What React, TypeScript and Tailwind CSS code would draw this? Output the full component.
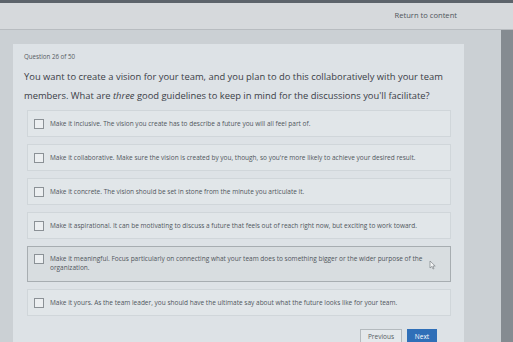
const options = [
  "Make it inclusive. The vision you create has to describe a future you will all feel part of.",
  "Make it collaborative. Make sure the vision is created by you, though, so you're more likely to achieve your desired result.",
  "Make it concrete. The vision should be set in stone from the minute you articulate it.",
  "Make it aspirational. It can be motivating to discuss a future that feels out of reach right now, but exciting to work toward.",
  "Make it meaningful. Focus particularly on connecting what your team does to something bigger or the wider purpose of the organization.",
  "Make it yours. As the team leader, you should have the ultimate say about what the future looks like for your team.",
];

function Option({ text, hover }: { text: string; hover?: boolean }) {
  return (
    <div
      className={
        "relative flex gap-[6px] pl-[6px] pr-[22px] border " +
        (hover
          ? "h-[36px] items-start pt-[7px] bg-[#d8dde0] border-[#a7adb1]"
          : "h-[27px] items-center bg-[#e1e6e9] border-[#d0d6da]")
      }
    >
      <span className="shrink-0 w-[10px] h-[10px] border border-[#8b9196] bg-[#eceff1]" />
      <span className="text-[6.5px] leading-[9px] text-[#50565c]">{text}</span>
      {hover && (
        <svg
          className="absolute right-[14px] top-[13px]"
          width="7"
          height="10"
          viewBox="0 0 7 10"
        >
          <path d="M1 1 L1 8 L2.8 6.4 L4 9 L5 8.6 L3.9 6 L6.2 6 Z" fill="#f4f5f6" stroke="#6d7277" strokeWidth="0.6" />
        </svg>
      )}
    </div>
  );
}

export default function App() {
  return (
    <div
      className="relative w-[513px] h-[342px] overflow-hidden bg-[#cbd0d4]"
      style={{ fontFamily: '"Open Sans", "Noto Sans", sans-serif' }}
    >
      <div className="h-[3px] bg-[#5d646b]" />
      <div className="h-[27px] bg-[#d6d9dc] flex items-center justify-end pr-[56px] border-b border-[#b8bcc0]">
        <span className="text-[7.6px] text-[#4f555b]">Return to content</span>
      </div>
      <div className="flex">
        <div className="ml-[13px] mt-[14px] w-[451px] h-[300px] bg-[#dde2e6] pl-[11px] pt-[9px]">
          <div className="text-[6.2px] leading-[8px] text-[#555b61]">Question 26 of 50</div>
          <div className="mt-[6px] text-[9.4px] leading-[19px] text-[#3b4046]">
            You want to create a vision for your team, and you plan to do this collaboratively with your team
            members. What are <span className="italic">three</span> good guidelines to keep in mind for the
            discussions you'll facilitate?
          </div>
          <div className="mt-[5px] ml-[3px] w-[424px] flex flex-col gap-[7px]">
            {options.map((t, i) => (
              <Option key={i} text={t} hover={i === 4} />
            ))}
          </div>
          <div className="mt-[13px] mr-[27px] flex justify-end gap-[5px]">
            <button className="w-[42px] h-[16px] border border-[#b4babe] bg-[#e4e8eb] text-[6.5px] text-[#555b61]">
              Previous
            </button>
            <button className="w-[30px] h-[16px] bg-[#2f6fb8] text-[6.5px] text-white">Next</button>
          </div>
        </div>
        <div className="flex-1 flex justify-end">
          <div className="w-[12px] h-[320px] bg-[#858b91]" />
        </div>
      </div>
    </div>
  );
}
